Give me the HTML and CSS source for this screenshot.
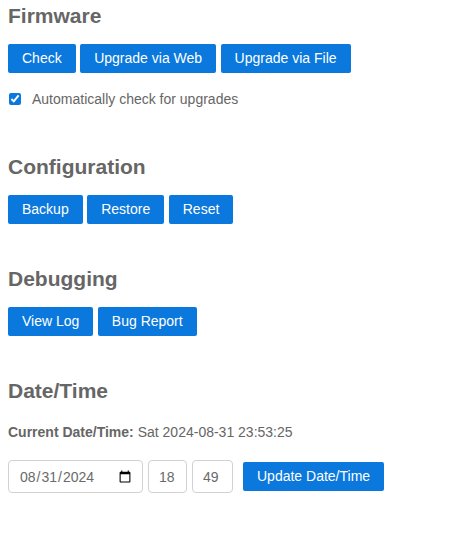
FILE: index.html
```html
<!DOCTYPE html>
<html lang="en">
<head>
<meta charset="utf-8">
<title>System</title>
<link rel="stylesheet" href="styles.css">
</head>
<body>
<div class="page">
  <section class="section section-firmware">
    <h2 class="heading">Firmware</h2>
    <div class="btn-row">
      <button class="btn">Check</button>
      <button class="btn">Upgrade via Web</button>
      <button class="btn">Upgrade via File</button>
    </div>
    <label class="check-row">
      <input type="checkbox" class="check" checked>
      <span>Automatically check for upgrades</span>
    </label>
  </section>

  <section class="section">
    <h2 class="heading">Configuration</h2>
    <div class="btn-row">
      <button class="btn">Backup</button>
      <button class="btn">Restore</button>
      <button class="btn">Reset</button>
    </div>
  </section>

  <section class="section">
    <h2 class="heading">Debugging</h2>
    <div class="btn-row">
      <button class="btn">View Log</button>
      <button class="btn">Bug Report</button>
    </div>
  </section>

  <section class="section">
    <h2 class="heading">Date/Time</h2>
    <p class="current"><b>Current Date/Time:</b> Sat 2024-08-31 23:53:25</p>
    <div class="dt-row">
      <input type="date" class="field date" value="2024-08-31">
      <input type="number" class="field num num-h" value="18">
      <input type="number" class="field num num-m" value="49">
      <button class="btn update">Update Date/Time</button>
    </div>
  </section>
</div>
</body>
</html>
```

FILE: styles.css
```css
html, body {
  margin: 0;
  padding: 0;
  background: #ffffff;
}

.page {
  padding: 6px 8px 0 8px;
  font-family: "Liberation Sans", Arial, sans-serif;
  font-size: 14px;
  color: #666666;
}

.section {
  margin-bottom: 45px;
}

.section-firmware {
  padding-bottom: 5px;
}

.heading {
  margin: 0 0 18px 0;
  font-size: 21px;
  line-height: 20px;
  font-weight: bold;
  color: #666666;
}

.btn-row {
  display: flex;
  gap: 4.5px;
}

.btn {
  font-family: "Liberation Sans", Arial, sans-serif;
  font-size: 14px;
  line-height: 17px;
  padding: 6px 14px;
  border: 0;
  border-radius: 2px;
  background: #0a78dc;
  color: #ffffff;
  cursor: pointer;
}

.check-row {
  display: flex;
  align-items: center;
  margin-top: 18px;
  height: 16px;
  line-height: 16px;
}

.check {
  width: 12px;
  height: 12px;
  margin: 0 11px 0 1px;
  accent-color: #0a78dc;
}

.current {
  margin: 23px 0 20px 0;
  line-height: 16px;
}

.current b {
  font-weight: bold;
}

.dt-row {
  display: flex;
  align-items: center;
  gap: 5px;
}

.field {
  box-sizing: border-box;
  height: 33px;
  border: 1px solid #d2d2d2;
  border-radius: 4px;
  font-family: "Liberation Sans", Arial, sans-serif;
  font-size: 14px;
  color: #6a6a6a;
  background: #ffffff;
  padding: 0 10px;
}

.date {
  width: 135px;
  padding-right: 8px;
}

.date::-webkit-calendar-picker-indicator {
  margin-left: 2px;
}

.num {
  -moz-appearance: textfield;
  appearance: textfield;
}

.num::-webkit-inner-spin-button,
.num::-webkit-outer-spin-button {
  -webkit-appearance: none;
  margin: 0;
}

.num-h {
  width: 39px;
}

.num-m {
  width: 41px;
}

.update {
  margin-left: 5px;
}
```
